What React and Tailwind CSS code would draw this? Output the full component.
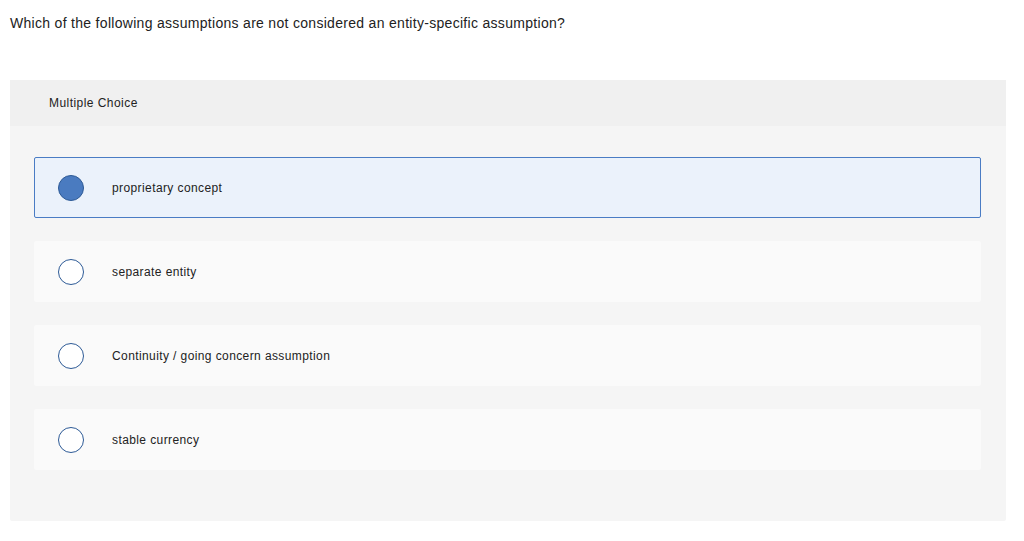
import React, { useState } from 'react';

const options = [
  'proprietary concept',
  'separate entity',
  'Continuity / going concern assumption',
  'stable currency',
];

export default function App() {
  const [selected, setSelected] = useState(0);

  return (
    <div className="min-h-[541px] bg-white font-['Liberation_Sans',Arial,sans-serif] text-[#222]">
      <div className="px-[10px] pt-[14px]">
        <p className="text-[14px] leading-[18px] tracking-[0.3px]">
          Which of the following assumptions are not considered an entity-specific assumption?
        </p>

        <div className="mt-[48px] mr-[8px] rounded-[2px] bg-[#f5f5f5] pb-[51px]">
          <div className="flex h-[46px] items-center bg-[#f0f0f0] px-[39px] text-[12px] tracking-[0.45px]">
            Multiple Choice
          </div>

          <div className="flex flex-col gap-[23px] px-[24px] pt-[31px] pr-[25px]">
            {options.map((opt, i) => (
              <button
                key={opt}
                onClick={() => setSelected(i)}
                className={`flex h-[61px] items-center rounded-[2px] border text-left ${
                  selected === i ? 'border-[#4a7cc4] bg-[#ebf2fb]' : 'border-transparent bg-[#fafafa]'
                }`}
              >
                <span
                  className={`ml-[23px] h-[26px] w-[26px] shrink-0 rounded-full border ${
                    selected === i ? 'border-[#2d5a96] bg-[#4a7bc0]' : 'border-[#2d5a96] bg-white'
                  }`}
                />
                <span className="ml-[28px] text-[12px] tracking-[0.4px]">{opt}</span>
              </button>
            ))}
          </div>
        </div>
      </div>
    </div>
  );
}
